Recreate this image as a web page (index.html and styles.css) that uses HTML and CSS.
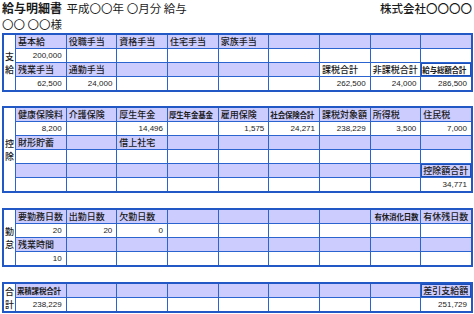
FILE: index.html
```html
<!DOCTYPE html>
<html lang="ja">
<head>
<meta charset="utf-8">
<title>給与明細書</title>
<link rel="stylesheet" href="styles.css">
</head>
<body>
<div class="page">
  <div class="head">
    <div class="title"><b>給与明細書</b> 平成〇〇年 〇月分 給与</div>
    <div class="company">株式会社〇〇〇〇</div>
  </div>
  <div class="name">〇〇 〇〇様</div>

  <div class="sheet r4 t1">
    <div class="lab"><span>支</span><span>給</span></div>
    <div class="c h">基本給</div><div class="c h">役職手当</div><div class="c h">資格手当</div><div class="c h">住宅手当</div><div class="c h">家族手当</div><div class="c h"></div><div class="c h"></div><div class="c h"></div><div class="c h"></div>
    <div class="c n">200,000</div><div class="c"></div><div class="c"></div><div class="c"></div><div class="c"></div><div class="c"></div><div class="c"></div><div class="c"></div><div class="c"></div>
    <div class="c h">残業手当</div><div class="c h">通勤手当</div><div class="c h"></div><div class="c h"></div><div class="c h"></div><div class="c h"></div><div class="c">課税合計</div><div class="c">非課税合計</div><div class="c s em">給与総額合計</div>
    <div class="c n">62,500</div><div class="c n">24,000</div><div class="c"></div><div class="c"></div><div class="c"></div><div class="c"></div><div class="c n">262,500</div><div class="c n">24,000</div><div class="c n">286,500</div>
  </div>

  <div class="sheet r6 t2">
    <div class="lab"><span>控</span><span>除</span></div>
    <div class="c h">健康保険料</div><div class="c h">介護保険</div><div class="c h">厚生年金</div><div class="c h s">厚生年金基金</div><div class="c h">雇用保険</div><div class="c h s">社会保険合計</div><div class="c h">課税対象額</div><div class="c h">所得税</div><div class="c h">住民税</div>
    <div class="c n">8,200</div><div class="c"></div><div class="c n">14,496</div><div class="c"></div><div class="c n">1,575</div><div class="c n">24,271</div><div class="c n">238,229</div><div class="c n">3,500</div><div class="c n">7,000</div>
    <div class="c h">財形貯蓄</div><div class="c h"></div><div class="c h">借上社宅</div><div class="c h"></div><div class="c h"></div><div class="c h"></div><div class="c h"></div><div class="c h"></div><div class="c h"></div>
    <div class="c"></div><div class="c"></div><div class="c"></div><div class="c"></div><div class="c"></div><div class="c"></div><div class="c"></div><div class="c"></div><div class="c"></div>
    <div class="c h"></div><div class="c h"></div><div class="c h"></div><div class="c h"></div><div class="c h"></div><div class="c h"></div><div class="c h"></div><div class="c h"></div><div class="c h em">控除額合計</div>
    <div class="c"></div><div class="c"></div><div class="c"></div><div class="c"></div><div class="c"></div><div class="c"></div><div class="c"></div><div class="c"></div><div class="c n">34,771</div>
  </div>

  <div class="sheet r4 t3">
    <div class="lab"><span>勤</span><span>怠</span></div>
    <div class="c h">要勤務日数</div><div class="c h">出勤日数</div><div class="c h">欠勤日数</div><div class="c h"></div><div class="c h"></div><div class="c h"></div><div class="c h"></div><div class="c h s r">有休消化日数</div><div class="c h">有休残日数</div>
    <div class="c n">20</div><div class="c n">20</div><div class="c n">0</div><div class="c"></div><div class="c"></div><div class="c"></div><div class="c"></div><div class="c"></div><div class="c"></div>
    <div class="c h">残業時間</div><div class="c h"></div><div class="c h"></div><div class="c h"></div><div class="c h"></div><div class="c h"></div><div class="c h"></div><div class="c h"></div><div class="c h"></div>
    <div class="c n">10</div><div class="c"></div><div class="c"></div><div class="c"></div><div class="c"></div><div class="c"></div><div class="c"></div><div class="c"></div><div class="c"></div>
  </div>

  <div class="sheet r2 t4">
    <div class="lab"><span>合</span><span>計</span></div>
    <div class="c h s">累積課税合計</div><div class="c h"></div><div class="c h"></div><div class="c h"></div><div class="c h"></div><div class="c h"></div><div class="c h"></div><div class="c h"></div><div class="c h em">差引支給額</div>
    <div class="c n">238,229</div><div class="c"></div><div class="c"></div><div class="c"></div><div class="c"></div><div class="c"></div><div class="c"></div><div class="c"></div><div class="c n">251,729</div>
  </div>
</div>
</body>
</html>
```

FILE: styles.css
```css
html, body {
  margin: 0;
  padding: 0;
  background: #ffffff;
}

body {
  font-family: "Noto Sans CJK JP", "Liberation Sans", sans-serif;
  color: #1a1a1a;
}

.page {
  width: 474px;
  padding: 0 0 0 2px;
  box-sizing: border-box;
}

.head {
  display: flex;
  justify-content: space-between;
  align-items: center;
  height: 16px;
  padding-right: 2px;
}

.title {
  font-size: 11.5px;
  line-height: 16px;
  white-space: nowrap;
}

.title b {
  font-size: 12px;
  font-weight: bold;
  margin-right: 2px;
}

.company {
  font-size: 11.5px;
  line-height: 16px;
  font-weight: 500;
}

.name {
  font-size: 11.5px;
  line-height: 14px;
  height: 14px;
  margin-top: 1px;
}

.sheet {
  display: grid;
  grid-template-columns: 11px repeat(9, 1fr);
  gap: 1px;
  background: #2b63cf;
  border: 2px solid #2158c6;
  width: 471px;
  box-sizing: border-box;
}

.r2 { grid-template-rows: repeat(2, 13px); }
.r4 { grid-template-rows: repeat(4, 13px); }
.r6 { grid-template-rows: repeat(6, 13px); }

.t1 { margin-top: 2px; }
.t2 { margin-top: 14px; }
.t3 { margin-top: 15px; }
.t4 { margin-top: 15px; }

.lab {
  grid-row: 1 / -1;
  grid-column: 1;
  background: #ffffff;
  display: flex;
  flex-direction: column;
  align-items: center;
  justify-content: center;
  font-size: 9px;
  font-weight: 500;
}

.lab span {
  display: block;
  height: 13px;
  line-height: 13px;
}

.c {
  background: #ffffff;
  font-size: 9px;
  line-height: 13px;
  padding: 0 2px;
  white-space: nowrap;
  overflow: hidden;
  font-weight: 500;
}

.c.h {
  background: #ccccff;
}

.c.n {
  text-align: right;
  padding-right: 4px;
  font-family: "Liberation Sans", sans-serif;
  font-size: 8px;
  font-weight: normal;
}

.c.s {
  font-size: 7.5px;
  font-weight: bold;
  letter-spacing: -0.2px;
  padding-left: 1px;
}

.c.r {
  text-align: right;
}

.c.em {
  box-shadow: inset 0 0 0 1px #1d4fb8;
}
```
